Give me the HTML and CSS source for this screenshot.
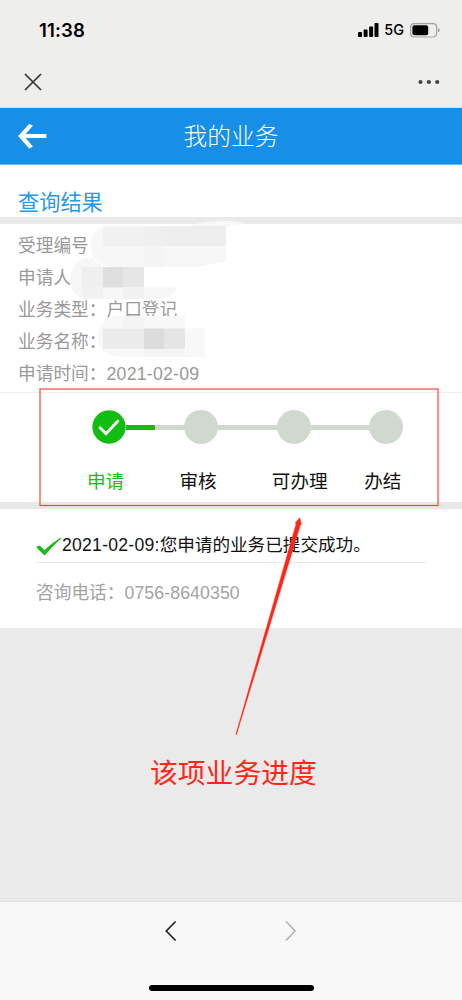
FILE: index.html
```html
<!DOCTYPE html>
<html lang="zh-CN">
<head>
<meta charset="utf-8">
<meta name="viewport" content="width=device-width">
<title>我的业务</title>
<link rel="stylesheet" href="styles.css">
</head>
<body>
<div class="phone">
  <div class="status">
    <span class="clock">11:38</span>
    <div class="signals">
      <svg class="bars" width="21" height="14" viewBox="0 0 21 14"><rect x="0" y="9" width="4" height="5" rx="1"/><rect x="5.6" y="6.5" width="4" height="7.5" rx="1"/><rect x="11.1" y="3.5" width="4" height="10.5" rx="1"/><rect x="16.5" y="0" width="4" height="14" rx="1"/></svg>
      <span class="network">5G</span>
      <svg class="battery" width="30" height="15" viewBox="0 0 30 15"><rect x=".6" y=".6" width="26" height="13.4" rx="3.5" fill="none" stroke="#a3a3a2" stroke-width="1.2"/><rect x="2.4" y="2.2" width="15.8" height="10" rx="2"/><path d="M28 5.3q1.6.6 1.6 2t-1.6 2z" fill="#999"/></svg>
    </div>
  </div>
  <div class="browser-bar">
    <svg width="18" height="18" viewBox="0 0 18 18"><path d="M1 1 17 17M17 1 1 17" fill="none" stroke="#333" stroke-width="1.7"/></svg>
    <svg width="22" height="6" viewBox="0 0 22 6" fill="#444"><circle cx="2.5" cy="3" r="2.1"/><circle cx="10.9" cy="3" r="2.1"/><circle cx="19.2" cy="3" r="2.1"/></svg>
  </div>
  <header class="header">
    <svg class="back" width="30" height="26" viewBox="0 0 30 26"><path d="M11.2.9 15 2.4 7.8 11.1H28.4V15H7.8L15 23.8 11.2 25.5 0 13z" fill="#fff"/></svg>
    <h1>我的业务</h1>
  </header>
  <h2 class="result-title">查询结果</h2>
  <div class="details">
    <p>受理编号</p>
    <p>申请人</p>
    <p>业务类型：户口登记</p>
    <p>业务名称：</p>
    <p>申请时间：<span class="date">2021-02-09</span></p>
  </div>
  <div class="steps">
    <div class="step done"><div class="track"><svg class="dot" width="34" height="34" viewBox="0 0 34 34"><circle cx="17" cy="17" r="16.7" fill="#11bd10"/><path d="M8.1 17.8 14 23.7 25.9 11" fill="none" stroke="#fff" stroke-width="2.8" stroke-linecap="round"/></svg><i></i></div><span>申请</span></div>
    <div class="step"><div class="track"><b class="dot"></b><i></i></div><span>审核</span></div>
    <div class="step"><div class="track"><b class="dot"></b><i></i></div><span>可办理</span></div>
    <div class="step last"><div class="track"><b class="dot"></b></div><span>办结</span></div>
  </div>
  <div class="message-card">
    <div class="message">
      <svg width="26" height="19" viewBox="0 0 26 19"><path d="M.8 9.5 3.4 8.6 8.5 13.1Q16 6 24.4.7L25.2 1.4Q16.5 8.8 8.7 18.4L.8 11z" fill="#18bd17"/></svg>
      <p><span class="date">2021-02-09:</span>您申请的业务已提交成功。</p>
    </div>
    <p class="hotline">咨询电话：<span class="phone-number">0756-8640350</span></p>
  </div>
  <main class="blank"><p class="note">该项业务进度</p></main>
  <footer class="toolbar">
    <div class="arrows">
      <svg width="12" height="22" viewBox="0 0 12 22"><path d="M10.6 1.5 1.3 11l9.3 9.5" fill="none" stroke="#222" stroke-width="1.7"/></svg>
      <svg width="12" height="22" viewBox="0 0 12 22"><path d="M.8 1.500 10.100 11l-9.300 9.500" fill="none" stroke="#b5b5b5" stroke-width="1.700"/></svg>
    </div>
    <div class="home"></div>
  </footer>
  <svg class="overlay" width="462" height="1000" viewBox="0 0 462 1000">
    <g>
      <path d="M91 246Q91 227 110 226H190Q205 220 231 221L245 223 240 224 226 226V262Q211 263 200 267H110Q92 264 91 246z" fill="#f7f7f7"/>
      <path d="M103 226H226V246H103z" fill="#f1f1f1"/>
      <path d="M164 226H226V246H164z" fill="#eee"/>
      <path d="M144 226H164V246H144z" fill="#efefef"/>
      <path d="M144 246H164V267H144z" fill="#f4f4f4"/>
      <path d="M70 279Q73 258 91 258L103 267H144V287.500H177Q172 299 154 299H84Q71 296 70 279z" fill="#f6f6f6"/>
      <path d="M82 267H103V287.500H82z" fill="#efefef"/>
      <path d="M103 267H123V287.500H103z" fill="#dedede"/>
      <path d="M123 267H144V287.500H123z" fill="#e6e6e6"/>
      <path d="M82 287.500H103V299H84zM123 287.500H144V299H123z" fill="#f1f1f1"/>
      <path d="M97 337Q101 317 118 316H185V328.500H205V357H118Q99 354 97 337z" fill="#f8f8f8"/>
      <path d="M123 316H144V328H123zM144 349H185V357H144z" fill="#f4f4f4"/>
      <path d="M103 328.500H144V349H103z" fill="#ebebeb"/>
      <path d="M144 328.500H164V349H144z" fill="#dcdcdc"/>
      <path d="M164 328.500H185V349H164z" fill="#e5e5e5"/>
    </g>
    <rect x="40" y="389" width="398" height="116.500" fill="none" stroke="#f9473e" stroke-width="1.200"/>
    <path d="M235.800 734.500 296.200 523.500 295 523 299.800 517.700 301.500 524.800 300.600 524.500 236.500 734.500z" fill="#ff2618" stroke="#ff2618" stroke-width=".4"/>
  </svg>
</div>
</body>
</html>
```
FILE: styles.css
```css
* { box-sizing: border-box; margin: 0; padding: 0; }
body { font-family: "Liberation Sans", "Noto Sans CJK SC", sans-serif; background: #eaeaea; }
svg { display: block; flex: none; }
.phone { position: relative; width: 462px; height: 1000px; display: flex; flex-direction: column; overflow: hidden; }
.status { height: 56px; padding: 4px 22px 0 39px; background: #eeeeec; display: flex; align-items: center; justify-content: space-between; }
.clock { font: 600 18.6px/20px Inter, sans-serif; letter-spacing: .15px; }
.signals { display: flex; align-items: center; }
.network { font: 500 14.4px/18px Inter, sans-serif; margin: 0 6px 0 5.5px; }
.browser-bar { height: 52px; padding: 0 22px 0 24px; background: #eeeeec; border-bottom: 1px solid #d4dde3; display: flex; align-items: center; justify-content: space-between; }
.header { height: 57px; background: #188fe6; border-bottom: 1px solid #67b6ef; display: grid; grid-template-columns: 30px 1fr 30px; align-items: center; padding: 0 18px; }
.header h1 { color: #fff; font-size: 23.700px; line-height: 56px; padding-top: 1px; height: 56px; font-weight: 300; text-align: center; }
.result-title { height: 52px; padding: 21px 18px 0; background: #fff; color: #2698e9; font-size: 21.200px; line-height: 34px; font-weight: 400; }
.details { height: 176px; padding: 6px 18px 0; background: #fff; border-top: 7px solid #eaeaea; border-bottom: 1px solid #eee; color: #999; font-size: 17.700px; line-height: 32px; white-space: nowrap; }
.date { letter-spacing: .25px; }
.phone-number { letter-spacing: .1px; }
.steps { height: 116px; padding: 17px 0 0 88px; background: #fff; border-bottom: 7px solid #e8e8e8; display: flex; }
.step { width: 92.400px; flex: none; font-size: 18.600px; line-height: 30px; color: #111; }
.step span { display: block; margin-left: -1px; }
.track { height: 34px; padding-left: 4px; display: flex; align-items: center; margin-bottom: 23px; }
.dot { width: 34px; height: 34px; flex: none; border-radius: 50%; background: #d1d8d0; }
.track i { height: 5px; flex: 1; margin-right: -5px; background: #d1d8d0; }
.done { color: #18bd17; }
.done .dot { background: none; }
.done .track i { background: linear-gradient(90deg, #11bd10 50%, #d1d8d0 50%); }
.message-card { height: 119px; padding: 19px 36px 0; background: #fff; }
.message { height: 35px; border-bottom: 1px solid #e8e8e8; display: flex; align-items: center; gap: 0; color: #111; font-size: 17.600px; line-height: 32px; white-space: nowrap; }
.message svg { margin-top: 3px; }
.hotline { color: #a3a3a3; font-size: 17.700px; line-height: 32px; margin-top: 14px; }
.blank { flex: 1; padding-top: 126px; }
.note { padding-left: 150px; color: #ff2618; font-size: 27.800px; line-height: 40px; }
.toolbar { height: 99px; background: #f8f8f8; border-top: 1px solid #e2e2e2; display: flex; flex-direction: column; align-items: center; }
.arrows { width: 132px; margin-top: 18px; display: flex; justify-content: space-between; }
.home { width: 165px; height: 6px; border-radius: 3px; background: #000; margin-top: 43px; }
.overlay { position: absolute; left: 0; top: 0; pointer-events: none; }
```
